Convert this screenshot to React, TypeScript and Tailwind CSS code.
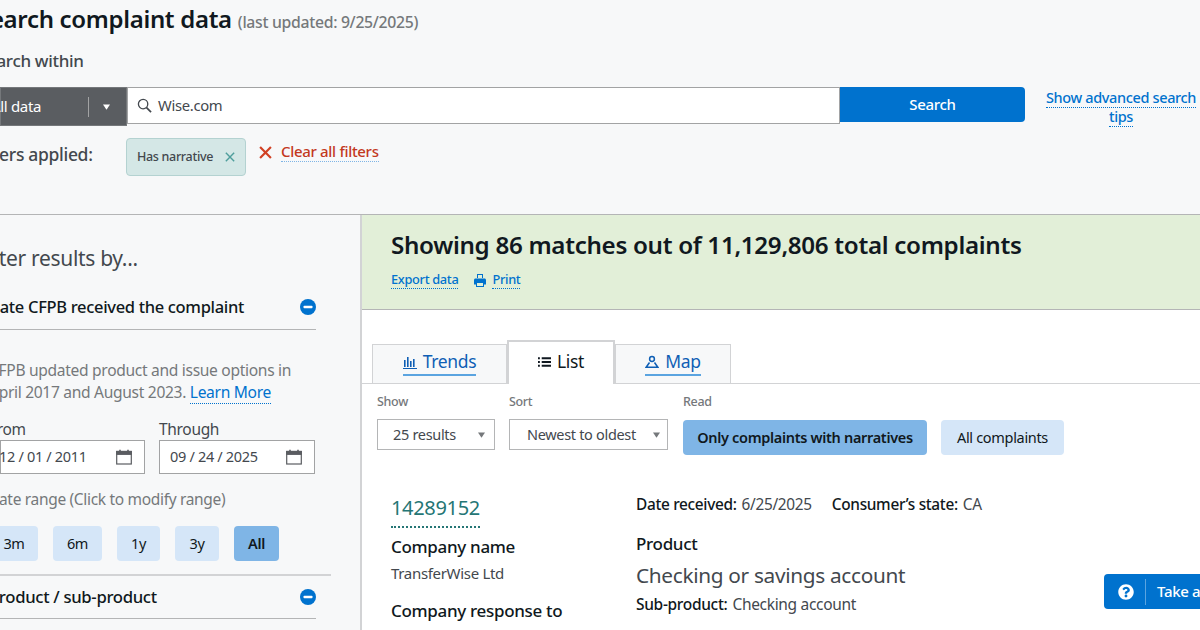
import React from "react";
import { FaQuestionCircle } from "react-icons/fa";

const Minus = () => (
  <svg viewBox="0 0 16 16" className="h-4 w-4 shrink-0">
    <circle cx="8" cy="8" r="8" fill="#0072ce" />
    <rect x="3.5" y="6.8" width="9" height="2.4" rx="0.8" fill="#fff" />
  </svg>
);

const Calendar = () => (
  <svg viewBox="0 0 16 16" className="h-[16px] w-[16px] shrink-0" fill="none" stroke="#5a5d61">
    <rect x="0.7" y="2.5" width="14.6" height="12.5" strokeWidth="1.2" />
    <rect x="0.7" y="2.5" width="14.6" height="2.8" fill="#5a5d61" strokeWidth="1.2" />
    <path d="M4 0.8v2.4M12 0.8v2.4" strokeWidth="1.6" />
  </svg>
);

const Cross = ({ color, size, weight = 1.7 }: { color: string; size: number; weight?: number }) => (
  <svg viewBox="0 0 12 12" width={size} height={size} className="shrink-0" fill="none" stroke={color} strokeWidth={weight}>
    <path d="M1 1l10 10M11 1L1 11" />
  </svg>
);

const Caret = ({ color }: { color: string }) => (
  <svg viewBox="0 0 8 6" width="7" height="6" className="shrink-0">
    <path d="M0 0h8L4 6z" fill={color} />
  </svg>
);

const TextLink = ({ children, className = "" }: { children: React.ReactNode; className?: string }) => (
  <a className={`border-b border-dotted border-[#0072ce] text-[#0072ce] ${className}`}>{children}</a>
);

const RangeBtn = ({ label, width, active }: { label: string; width: string; active?: boolean }) => (
  <div
    className={`flex h-[35px] items-center justify-center rounded-[4px] text-[14.5px] ${width} ${
      active ? "bg-[#7fb5e6] font-semibold" : "bg-[#d5e6f8]"
    }`}
  >
    {label}
  </div>
);

function SearchHeader() {
  return (
    <section className="h-[215px] border-b border-[#b4b5b6] pt-[3px]">
      <div className="ml-[-23px]">
        <h1 className="flex items-baseline gap-[6px] text-[24px] font-semibold leading-[32px] text-[#101820]">
          Search complaint data
          <span className="text-[15.8px] font-medium text-[#75787b]">(last updated: 9/25/2025)</span>
        </h1>
        <div className="mt-[11px] pl-[1px] text-[17px] font-medium leading-[24px] text-[#43484e]">Search within</div>
      </div>
      <div className="mt-[14px] flex items-start">
        <div className="flex h-[39px] w-[127px] items-center border border-[#75787b] bg-[#5a5d61] text-[15px] text-white">
          <span className="ml-[-10px] mr-[10px] w-[87px]">All data</span>
          <span className="h-[20px] border-l border-[#a2a3a4]" />
          <span className="ml-[14px]">
            <Caret color="#ffffff" />
          </span>
        </div>
        <div className="flex h-[37px] w-[713px] items-center gap-[6px] border border-[#a2a3a4] bg-white pl-[9px] text-[14.8px] text-[#43484e]">
          <svg viewBox="0 0 16 16" className="h-[15px] w-[15px]" fill="none" stroke="#43484e" strokeWidth="1.4">
            <circle cx="6.5" cy="6.5" r="5" />
            <path d="M10.2 10.2L15 15" strokeWidth="1.8" />
          </svg>
          Wise.com
        </div>
        <div className="flex h-[35px] w-[185px] items-center justify-center rounded-r-[4px] bg-[#0072ce] text-[15px] font-medium text-white">
          Search
        </div>
        <div className="ml-[20px] w-[152px] whitespace-nowrap pt-px text-center text-[14.5px] font-medium leading-[19px] tracking-[-0.025em] text-[#0072ce]">
          <TextLink>Show advanced search</TextLink>
          <br />
          <TextLink>tips</TextLink>
        </div>
      </div>
      <div className="mt-[12px] flex items-start">
        <div className="ml-[-25px] w-[151px] pt-[4px] text-[17.5px] font-medium leading-[24px] text-[#43484e]">Filters applied:</div>
        <div className="flex h-[38px] w-[120px] items-center justify-between rounded-[4px] border border-[#b4d2d1] bg-[#d4e7e6] pl-[10px] pr-[10px] text-[12.5px] font-medium text-[#43484e]">
          Has narrative
          <Cross color="#4f9e9c" size={10} />
        </div>
        <div className="ml-[13px] flex items-center gap-[9px] pt-[4px] text-[15px] font-medium text-[#c3391e]">
          <Cross color="#d14124" size={13} weight={2} />
          <a className="border-b border-dotted border-[#7fb5e6] leading-[19px]">Clear all filters</a>
        </div>
      </div>
    </section>
  );
}

function FilterPanel() {
  return (
    <aside className="h-[415px] w-[362px] shrink-0 overflow-hidden border-r-2 border-[#d2d3d5]">
      <div className="ml-[-22px] mt-[28px] text-[21px] leading-[30px] text-[#43484e]">Filter results by...</div>
      <div className="mt-[23px] flex h-[34px] w-[316px] items-start justify-between border-b border-[#b4b5b6]">
        <span className="ml-[-12px] whitespace-nowrap text-[16.5px] font-medium leading-[22px]">Date CFPB received the complaint</span>
        <span className="mt-[3px]"><Minus /></span>
      </div>
      <p className="ml-[-11px] mt-[29px] whitespace-nowrap text-[15.6px] leading-[22px] text-[#75787b]">
        CFPB updated product and issue options in
        <br />
        April 2017 and August 2023. <TextLink>Learn More</TextLink>
      </p>
      <div className="mt-[16px] flex gap-[14px]">
        <div className="w-[145px]">
          <div className="ml-[-11px] text-[15.5px] leading-[20px] text-[#43484e]">From</div>
          <div className="mt-px flex h-[34px] items-center justify-between border border-[#a2a3a4] bg-white pr-[12px] text-[14.5px] text-[#43484e]">
            <span className="ml-[-2px]">12 / 01 / 2011</span>
            <Calendar />
          </div>
        </div>
        <div className="w-[156px]">
          <div className="text-[15.5px] leading-[20px] text-[#43484e]">Through</div>
          <div className="mt-px flex h-[34px] items-center justify-between border border-[#a2a3a4] bg-white pl-[10px] pr-[12px] text-[14.5px] text-[#43484e]">
            <span>09 / 24 / 2025</span>
            <Calendar />
          </div>
        </div>
      </div>
      <div className="ml-[-12px] mt-[14px] text-[15.5px] leading-[22px] text-[#75787b]">Date range (Click to modify range)</div>
      <div className="mt-[16px] flex gap-[15px]">
        <div className="ml-[-10px] flex h-[35px] w-[48px] items-center justify-center rounded-[4px] bg-[#d5e6f8] text-[14.5px]">3m</div>
        <RangeBtn label="6m" width="w-[49px]" />
        <RangeBtn label="1y" width="w-[43px]" />
        <RangeBtn label="3y" width="w-[44px]" />
        <RangeBtn label="All" width="w-[45px]" active />
      </div>
      <div className="mt-[13px] flex h-[44px] w-[331px] items-center justify-between border-t-2 border-[#d2d3d5] pr-[15px]">
        <span className="ml-[-11px] text-[16.7px] font-medium">Product / sub-product</span>
        <Minus />
      </div>
      <div className="w-[316px] border-b border-[#b4b5b6]" />
    </aside>
  );
}

function Results() {
  return (
    <main className="relative h-[415px] min-w-0 flex-1 overflow-hidden bg-white">
      <div className="h-[95px] border-b border-[#b4b5b6] bg-[#e2efd8] pl-[29px] pt-[13px]">
        <h2 className="whitespace-nowrap text-[24.2px] font-semibold leading-[34px] text-[#101820]">Showing 86 matches out of 11,129,806 total complaints</h2>
        <div className="mt-[9px] flex items-center gap-[16px] text-[12.8px] font-medium leading-[17px] text-[#0f6fc0]">
          <TextLink>Export data</TextLink>
          <span className="flex items-center gap-[6px]">
            <svg viewBox="0 0 12 13" className="h-[13px] w-[12px]" fill="#0072ce">
              <path d="M3 0h6v4H8V1H4v3H3zM1.5 4.5h9c.8 0 1.5.7 1.5 1.5v4.5h-2V13H2v-2.5H0V6c0-.8.7-1.5 1.5-1.5zM3 9v3h6V9z" />
            </svg>
            <TextLink>Print</TextLink>
          </span>
        </div>
      </div>
      <div className="mt-[30px] flex h-[44px] items-end border-b border-[#d2d3d5] pl-[10px]">
        <div className="flex h-[39px] w-[135px] items-center justify-center border border-b-0 border-[#d2d3d5] bg-[#f7f8f9] pb-[3px] text-[17.5px] text-[#0f5fb5]">
          <span className="flex items-center gap-[6px] border-b-2 border-[#5ba4e0] leading-[25px]">
            <svg viewBox="0 0 14 14" className="h-[14px] w-[14px]" fill="#0f5fb5">
              <path d="M0 13h14v1H0zM1 5h1.6v7H1zM4 2h1.6v10H4zM7 6h1.6v6H7zM10 4h1.6v8H10z" />
            </svg>
            Trends
          </span>
        </div>
        <div className="mb-[-1px] flex h-[44px] w-[108px] items-center justify-center border-x-2 border-t-2 border-[#d2d3d5] bg-white pb-[3px] text-[17.5px] text-[#101820]">
          <span className="flex items-center gap-[6px]">
            <svg viewBox="0 0 14 12" className="h-[12px] w-[13px]" fill="#101820">
              <path d="M0 1h2v2H0zM4 1h10v2H4zM0 5h2v2H0zM4 5h10v2H4zM0 9h2v2H0zM4 9h10v2H4z" />
            </svg>
            List
          </span>
        </div>
        <div className="flex h-[39px] w-[116px] items-center justify-center border border-b-0 border-[#d2d3d5] bg-[#f7f8f9] pb-[3px] text-[17.5px] text-[#0f5fb5]">
          <span className="flex items-center gap-[6px] border-b-2 border-[#5ba4e0] leading-[25px]">
            <svg viewBox="0 0 14 13" className="h-[13px] w-[14px]" fill="none" stroke="#0f5fb5" strokeWidth="1.5">
              <circle cx="7" cy="4" r="2.4" />
              <path d="M4.5 7.5L1.2 12.2h11.6L9.5 7.5" />
            </svg>
            Map
          </span>
        </div>
      </div>
      <div className="ml-[15px] mt-[8px] flex items-start">
        <div className="mr-[14px] w-[118px]">
          <div className="text-[12.5px] font-medium leading-[20px] text-[#75787b]">Show</div>
          <div className="mt-[7px] flex h-[31px] items-center justify-between border border-[#b4b5b6] pl-[15px] pr-[9px] text-[14.5px] text-[#43484e]">
            25 results
            <Caret color="#75787b" />
          </div>
        </div>
        <div className="mr-[15px] w-[159px]">
          <div className="text-[12.5px] font-medium leading-[20px] text-[#75787b]">Sort</div>
          <div className="mt-[7px] flex h-[31px] items-center justify-between border border-[#b4b5b6] pl-[17px] pr-[7px] text-[14.5px] text-[#43484e]">
            Newest to oldest
            <Caret color="#75787b" />
          </div>
        </div>
        <div>
          <div className="text-[12.5px] font-medium leading-[20px] text-[#75787b]">Read</div>
          <div className="mt-[8px] flex gap-[14px]">
            <div className="flex h-[35px] w-[244px] items-center justify-center rounded-[4px] bg-[#7fb5e6] text-[14.5px] font-semibold text-[#101820]">
              Only complaints with narratives
            </div>
            <div className="flex h-[35px] w-[123px] items-center justify-center rounded-[4px] bg-[#d5e6f8] text-[14.5px] text-[#101820]">
              All complaints
            </div>
          </div>
        </div>
      </div>
      <div className="ml-[29px] mt-[37px] flex">
        <div className="w-[245px]">
          <a className="inline-block border-b-2 border-dotted border-[#257675] pb-[2px] text-[20px] leading-[32px] text-[#257675]">14289152</a>
          <div className="mt-[7px] text-[17px] font-medium leading-[24px] text-[#101820]">Company name</div>
          <div className="mt-[3px] text-[15px] leading-[22px] text-[#43484e]">TransferWise Ltd</div>
          <div className="mt-[15px] w-[190px] text-[17px] font-medium leading-[24px] text-[#101820]">Company response to consumer</div>
        </div>
        <div className="pt-px">
          <div className="flex items-center whitespace-nowrap text-[15.4px] leading-[24px] text-[#43484e]">
            <span className="font-medium text-[#101820]">Date received:</span>
            <span className="ml-[5px]">6/25/2025</span>
            <span className="ml-[20px] font-medium text-[#101820]">Consumer’s state:</span>
            <span className="ml-[5px]">CA</span>
          </div>
          <div className="mt-[15px] text-[17px] font-medium leading-[24px] text-[#101820]">Product</div>
          <div className="mt-[4px] whitespace-nowrap text-[20.8px] leading-[30px] text-[#43484e]">Checking or savings account</div>
          <div className="mt-[3px] flex whitespace-nowrap text-[15.5px] leading-[22px] text-[#43484e]">
            <span className="font-medium text-[#101820]">Sub-product:</span>
            <span className="ml-[5px]">Checking account</span>
          </div>
        </div>
      </div>
      <div className="absolute left-[742px] top-[359px] flex h-[35px] w-[120px] items-center whitespace-nowrap rounded-l-[4px] bg-[#0072ce] pl-[14px] text-[15px] font-medium text-white">
        <FaQuestionCircle className="h-[16px] w-[16px] shrink-0" />
        <span className="mx-[11px] h-[26px] border-l border-[#5ba4e0]" />
        Take a tour
      </div>
    </main>
  );
}

export default function App() {
  return (
    <div className="h-[630px] w-[1200px] overflow-hidden bg-[#f7f8f9] font-['Noto_Sans',sans-serif] tracking-[-0.02em] text-[#101820]">
      <SearchHeader />
      <div className="flex">
        <FilterPanel />
        <Results />
      </div>
    </div>
  );
}
